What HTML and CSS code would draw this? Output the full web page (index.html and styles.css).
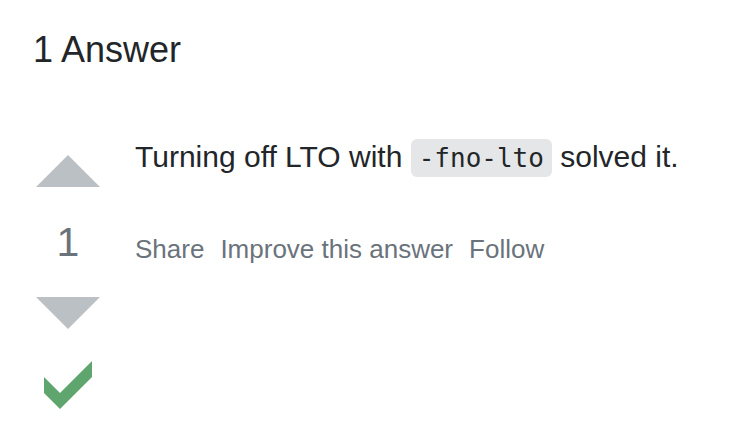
FILE: index.html
```html
<!DOCTYPE html>
<html lang="en">
<head>
<meta charset="utf-8">
<title>1 Answer</title>
<link rel="stylesheet" href="styles.css">
</head>
<body>
<div class="page">
  <h2 class="answers-title">1 Answer</h2>
  <div class="answer">
    <div class="votecell">
      <svg class="vote-icon" width="72" height="72" viewBox="0 0 36 36" aria-label="Up vote"><path d="M2 25h32L18 9 2 25Z"/></svg>
      <div class="vote-count">1</div>
      <svg class="vote-icon" width="72" height="72" viewBox="0 0 36 36" aria-label="Down vote"><path d="M2 11h32L18 27 2 11Z"/></svg>
      <svg class="accepted" width="72" height="72" viewBox="0 0 36 36" aria-label="Accepted"><path d="M6 14l8 8L30 6v8L14 30l-8-8v-8Z"/></svg>
    </div>
    <div class="postcell">
      <p class="post-body">Turning off LTO with <code>-fno-lto</code> solved it.</p>
      <div class="post-menu">
        <a href="#">Share</a>
        <a href="#">Improve this answer</a>
        <a href="#">Follow</a>
      </div>
    </div>
  </div>
</div>
</body>
</html>
```

FILE: styles.css
```css
html, body {
  margin: 0;
  padding: 0;
  background: #ffffff;
}

body {
  font-family: "Liberation Sans", Arial, Helvetica, sans-serif;
  color: #232629;
}

.page {
  padding: 26px 30px 0 30px;
}

.answers-title {
  margin: 0 0 0 3px;
  font-size: 36px;
  line-height: 47px;
  font-weight: 400;
  color: #232629;
}

.answer {
  display: flex;
  gap: 31px;
  margin-top: 64px;
}

.votecell {
  display: flex;
  flex-direction: column;
  align-items: center;
  width: 72px;
  margin-left: 2px;
}

.vote-icon {
  display: block;
  fill: #bbc0c4;
}

.vote-count {
  height: 66px;
  font-size: 41px;
  line-height: 66px;
  color: #6a737c;
  text-align: center;
}

.accepted {
  display: block;
  margin-top: 2px;
  fill: #5ea66e;
}

.postcell {
  flex: 1;
}

.post-body {
  margin: 0;
  font-size: 30px;
  line-height: 39px;
  color: #232629;
}

.post-body code {
  font-family: "DejaVu Sans Mono", "Liberation Mono", monospace;
  font-size: 26px;
  background: #e4e6e8;
  padding: 4px 8px;
  border-radius: 6px;
  color: #232629;
}

.post-menu {
  display: flex;
  gap: 16px;
  margin-top: 54px;
  font-size: 26px;
  line-height: 34px;
}

.post-menu a {
  color: #6a737c;
  text-decoration: none;
}
```
